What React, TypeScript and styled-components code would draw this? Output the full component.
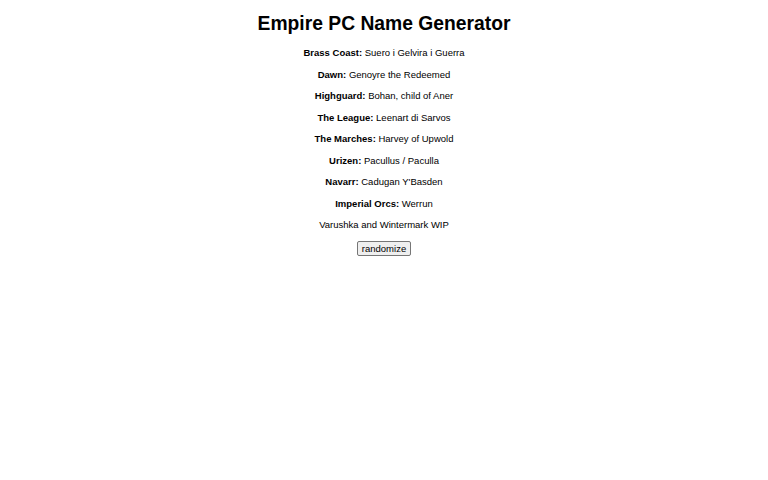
import styled, { createGlobalStyle } from "styled-components";

const GlobalStyle = createGlobalStyle`
  body {
    margin: 0;
    background: #ffffff;
    font-family: "Liberation Sans", Arial, sans-serif;
    color: #000000;
  }
`;

const Page = styled.main`
  display: flex;
  flex-direction: column;
  align-items: center;
  padding-top: 12px;
  text-align: center;
`;

const Title = styled.h1`
  margin: 0 0 11px;
  font-size: 19.3px;
  line-height: 24px;
  font-weight: bold;
`;

const Line = styled.p`
  margin: 0 0 10px;
  font-size: 9.5px;
  line-height: 11.5px;
`;

const Culture = styled.b`
  font-weight: bold;
`;

const Button = styled.button`
  font-family: "Liberation Sans", Arial, sans-serif;
  font-size: 9.5px;
  line-height: 11px;
  padding: 1px 4px;
  background: #efefef;
  border: 1px solid #767676;
  border-radius: 2px;
  color: #000000;
`;

const names: [string, string][] = [
  ["Brass Coast", "Suero i Gelvira i Guerra"],
  ["Dawn", "Genoyre the Redeemed"],
  ["Highguard", "Bohan, child of Aner"],
  ["The League", "Leenart di Sarvos"],
  ["The Marches", "Harvey of Upwold"],
  ["Urizen", "Pacullus / Paculla"],
  ["Navarr", "Cadugan Y'Basden"],
  ["Imperial Orcs", "Werrun"],
];

export default function App() {
  return (
    <>
      <GlobalStyle />
      <Page>
        <Title>Empire PC Name Generator</Title>
        {names.map(([culture, name]) => (
          <Line key={culture}>
            <Culture>{culture}:</Culture> {name}
          </Line>
        ))}
        <Line>Varushka and Wintermark WIP</Line>
        <Button>randomize</Button>
      </Page>
    </>
  );
}
